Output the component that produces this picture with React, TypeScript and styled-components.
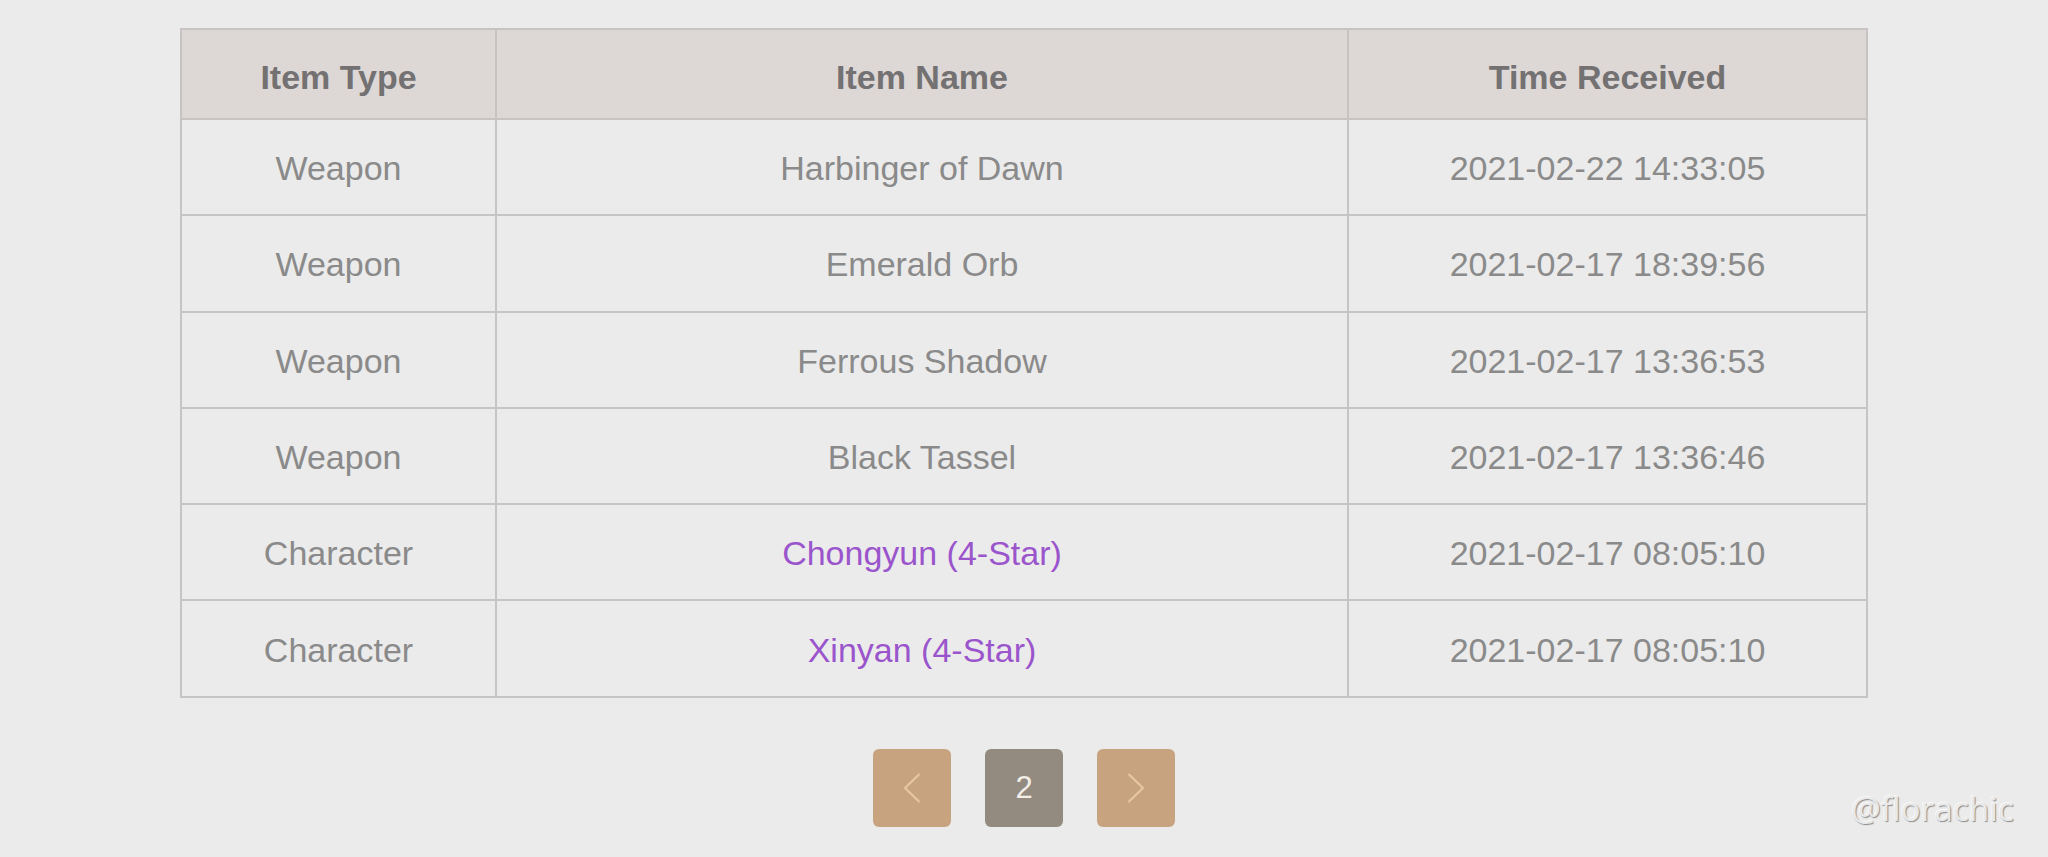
import React from 'react';
import styled, { createGlobalStyle } from 'styled-components';

type Record = {
	type: string;
	name: string;
	time: string;
	star?: 4 | 5;
};

const records: Record[] = [
	{ type: 'Weapon', name: 'Harbinger of Dawn', time: '2021-02-22 14:33:05' },
	{ type: 'Weapon', name: 'Emerald Orb', time: '2021-02-17 18:39:56' },
	{ type: 'Weapon', name: 'Ferrous Shadow', time: '2021-02-17 13:36:53' },
	{ type: 'Weapon', name: 'Black Tassel', time: '2021-02-17 13:36:46' },
	{ type: 'Character', name: 'Chongyun (4-Star)', time: '2021-02-17 08:05:10', star: 4 },
	{ type: 'Character', name: 'Xinyan (4-Star)', time: '2021-02-17 08:05:10', star: 4 },
];

const Chevron = ({ dir }: { dir: 'left' | 'right' }) => (
	<svg width="20" height="30" viewBox="0 0 20 30" fill="none">
		<path
			d={dir === 'left' ? 'M17 1.5 L3 15 L17 28.5' : 'M3 1.5 L17 15 L3 28.5'}
			stroke="#e7c8a6"
			strokeWidth="2"
			strokeLinecap="round"
			strokeLinejoin="round"
		/>
	</svg>
);

const App = () => {
	return (
		<Page>
			<GlobalStyle />
			<Table>
				<colgroup>
					<col style={{ width: 315 }} />
					<col style={{ width: 852 }} />
					<col />
				</colgroup>
				<thead>
					<HeadRow>
						<HeadCell>Item Type</HeadCell>
						<HeadCell>Item Name</HeadCell>
						<HeadCell>Time Received</HeadCell>
					</HeadRow>
				</thead>
				<tbody>
					{records.map((r, i) => (
						<BodyRow key={i}>
							<Cell>{r.type}</Cell>
							<Cell $star={r.star}>{r.name}</Cell>
							<Cell>{r.time}</Cell>
						</BodyRow>
					))}
				</tbody>
			</Table>

			<Pager>
				<PageButton $kind="nav" aria-label="previous">
					<Chevron dir="left" />
				</PageButton>
				<PageButton $kind="current">2</PageButton>
				<PageButton $kind="nav" aria-label="next">
					<Chevron dir="right" />
				</PageButton>
			</Pager>

			<Watermark>@florachic</Watermark>
		</Page>
	);
};

export default App;

const GlobalStyle = createGlobalStyle`
	html, body {
		margin: 0;
		padding: 0;
		background: #ebebeb;
	}
	body {
		font-family: 'Liberation Sans', Arial, Helvetica, sans-serif;
	}
`;

const Page = styled.div`
	position: relative;
	width: 100%;
	height: 857px;
	padding-top: 28px;
	box-sizing: border-box;
	display: flex;
	flex-direction: column;
	align-items: center;
	background: #ebebeb;
	overflow: hidden;
`;

const Table = styled.table`
	width: 1688px;
	border-collapse: collapse;
	table-layout: fixed;
	border: 2px solid #c6c5c5;
	font-size: 34px;
`;

const HeadRow = styled.tr`
	height: 90px;
	background: #ddd7d6;
`;

const HeadCell = styled.th`
	border: 2px solid #c6c3c2;
	padding: 6px 0 0;
	color: #737171;
	font-weight: 700;
	text-align: center;
	vertical-align: middle;
`;

const BodyRow = styled.tr`
	height: 96.3px;
	background: #ebebeb;
`;

const Cell = styled.td<{ $star?: 4 | 5 }>`
	border: 2px solid #c6c5c5;
	padding: 3px 0 0;
	text-align: center;
	vertical-align: middle;
	color: ${({ $star }) => ($star === 4 ? '#9b55cc' : $star === 5 ? '#c88a3a' : '#8a8a8a')};
`;

const Pager = styled.div`
	display: flex;
	gap: 34px;
	margin-top: 51px;
`;

const PageButton = styled.button<{ $kind: 'nav' | 'current' }>`
	width: 78px;
	height: 78px;
	border: none;
	border-radius: 6px;
	padding: 0;
	display: flex;
	align-items: center;
	justify-content: center;
	background: ${({ $kind }) => ($kind === 'nav' ? '#c7a37f' : '#938b80')};
	color: #f2eee8;
	font-family: 'Liberation Sans', Arial, sans-serif;
	font-size: 31px;
	cursor: pointer;
`;

const Watermark = styled.span`
	position: absolute;
	right: 34px;
	bottom: 26px;
	font-family: 'Open Sans', 'Noto Sans', sans-serif;
	font-size: 33px;
	font-weight: 400;
	color: #e9e9e9;
	text-shadow: 1px 1px 1px #8c8c8c, -1px -1px 0 #f8f8f8;
	letter-spacing: 0.2px;
`;
